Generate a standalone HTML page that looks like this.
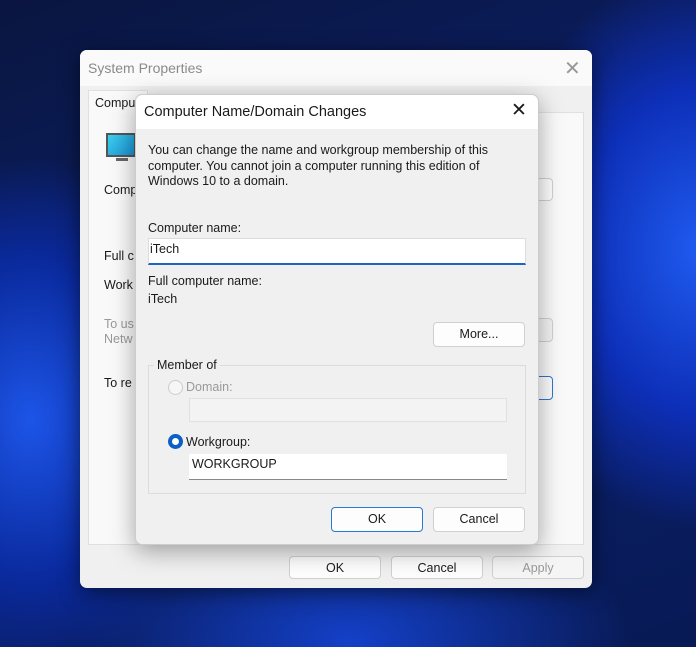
<!DOCTYPE html>
<html><head><style>
*{box-sizing:border-box;margin:0;padding:0}
body{width:696px;height:647px;overflow:hidden;position:relative;font-family:"Liberation Sans",sans-serif;font-size:12px;color:#1a1a1a;
background:radial-gradient(ellipse 300px 400px at 700px 250px,#1f5bf0 0%,#0d2fb8 40%,transparent 70%),radial-gradient(ellipse 250px 350px at 30px 420px,#1d55e8 0%,#0a2a9e 45%,transparent 75%),radial-gradient(ellipse 400px 200px at 350px 640px,#1440c8 0%,transparent 70%),linear-gradient(160deg,#0a1640 0%,#0b1f6a 50%,#081a55 100%);}
.abs{position:absolute}
.win{left:80px;top:50px;width:512px;height:538px;background:#f0f0f0;border-radius:7px;box-shadow:0 4px 20px rgba(0,0,0,.5)}
.btn{position:absolute;background:#fdfdfd;border:1px solid #d0d0d0;border-radius:4px;text-align:center;line-height:22px;font-size:12.5px}
.box{position:absolute;background:#fff;border:1px solid #dcdcdc}
</style></head><body>
<div class="abs win">
  <div class="abs" style="left:0;top:0;width:512px;height:36px;background:#fafafa;border-radius:7px 7px 0 0"></div>
  <div class="abs" style="left:8px;top:10px;font-size:14px;color:#8a8a8a">System Properties</div>
  <div class="abs" style="left:484px;top:6px;font-size:20px;color:#999">✕</div>
  <div class="abs" style="left:8px;top:62px;width:496px;height:433px;background:#f9f9f9;border:1px solid #e0e0e0"></div>
  <div class="abs" style="left:8px;top:40px;width:60px;height:24px;background:#f9f9f9;border:1px solid #e0e0e0;border-bottom:none"></div>
  <div class="abs" style="left:15px;top:46px;font-size:12.5px">Compu</div>
  <div class="abs" style="left:26px;top:83px;width:30px;height:24px;background:linear-gradient(135deg,#3dd0f0,#1a90d0);border:2px solid #555"></div>
  <div class="abs" style="left:36px;top:108px;width:12px;height:3px;background:#666"></div>
  <div class="abs" style="left:24px;top:133px;font-size:12.5px">Comp</div>
  <div class="abs" style="left:24px;top:199px;font-size:12.5px">Full c</div>
  <div class="abs" style="left:24px;top:228px;font-size:12.5px">Work</div>
  <div class="abs" style="left:24px;top:267px;font-size:12.5px;color:#999">To us</div>
  <div class="abs" style="left:24px;top:282px;font-size:12.5px;color:#999">Netw</div>
  <div class="abs" style="left:24px;top:326px;font-size:12.5px">To re</div>
  <div class="btn" style="left:455px;top:128px;width:18px;height:23px"></div>
  <div class="btn" style="left:455px;top:268px;width:18px;height:24px;background:#f3f3f3"></div>
  <div class="btn" style="left:455px;top:326px;width:18px;height:24px;border-color:#2a78d0"></div>
  <div class="btn" style="left:209px;top:506px;width:92px;height:23px">OK</div>
  <div class="btn" style="left:311px;top:506px;width:92px;height:23px">Cancel</div>
  <div class="btn" style="left:412px;top:506px;width:92px;height:23px;background:#f5f5f5;color:#999">Apply</div>
</div>

<div class="abs" style="left:135px;top:94px;width:404px;height:451px;background:#f0f0f0;border-radius:7px;box-shadow:0 6px 24px rgba(0,0,0,.35);border:1px solid #ccc">
  <div class="abs" style="left:0;top:0;width:402px;height:34px;background:#fff;border-radius:7px 7px 0 0"></div>
  <div class="abs" style="left:8px;top:9px;font-size:14.5px">Computer Name/Domain Changes</div>
  <div class="abs" style="left:375px;top:4px;font-size:19px">✕</div>
  <div class="abs" style="left:12px;top:48px;font-size:12.5px;line-height:15.5px;width:370px">You can change the name and workgroup membership of this computer. You cannot join a computer running this edition of Windows 10 to a domain.</div>
  <div class="abs" style="left:12px;top:126px;font-size:12.5px">Computer name:</div>
  <div class="box" style="left:12px;top:143px;width:378px;height:27px;border-bottom:2px solid #1a66c0;padding:3px 0 0 1px;font-size:12.5px">iTech</div>
  <div class="abs" style="left:12px;top:179px;font-size:12.5px">Full computer name:</div>
  <div class="abs" style="left:12px;top:197px;font-size:12.5px">iTech</div>
  <div class="btn" style="left:297px;top:227px;width:92px;height:25px">More...</div>
  <div class="abs" style="left:12px;top:270px;width:378px;height:129px;border:1px solid #dcdcdc"></div>
  <div class="abs" style="left:18px;top:263px;font-size:12.5px;background:#f0f0f0;padding:0 3px">Member of</div>
  <div class="abs" style="left:32px;top:285px;width:15px;height:15px;border-radius:50%;border:1px solid #ccc;background:#f6f6f6"></div>
  <div class="abs" style="left:50px;top:285px;font-size:12.5px;color:#999">Domain:</div>
  <div class="abs" style="left:53px;top:303px;width:318px;height:24px;border:1px solid #e0e0e0;background:#f3f3f3"></div>
  <div class="abs" style="left:32px;top:339px;width:15px;height:15px;border-radius:50%;border:4px solid #0c5fc4;background:#fff"></div>
  <div class="abs" style="left:50px;top:340px;font-size:12.5px">Workgroup:</div>
  <div class="box" style="left:53px;top:359px;width:318px;height:26px;border:none;border-bottom:1px solid #888;padding:3px 0 0 3px;font-size:12.5px">WORKGROUP</div>
  <div class="btn" style="left:195px;top:412px;width:92px;height:25px;border-color:#2a78d0">OK</div>
  <div class="btn" style="left:297px;top:412px;width:92px;height:25px">Cancel</div>
</div>
</body></html>
